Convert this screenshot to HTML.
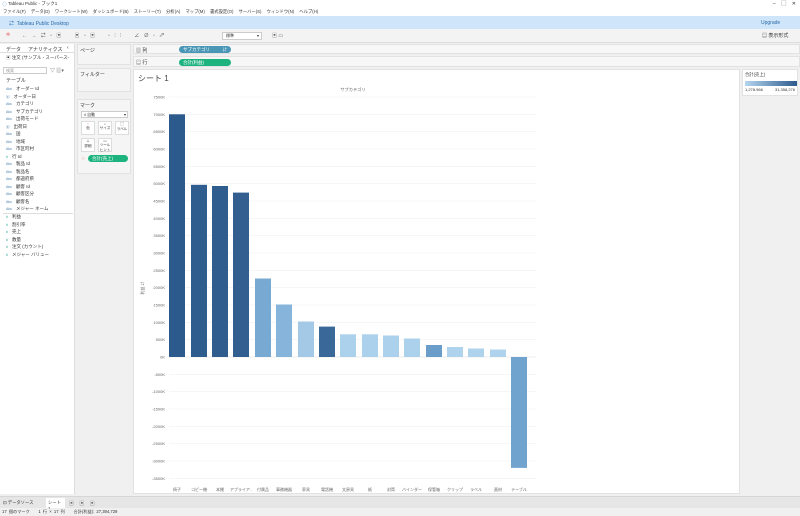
<!DOCTYPE html>
<html><head><meta charset="utf-8"><style>
*{margin:0;padding:0;box-sizing:border-box}
body{width:800px;height:516px;overflow:hidden;background:#f0f0f0;font-family:"Liberation Sans","Noto Sans CJK JP",sans-serif;font-size:5px;color:#333;position:relative}
.a{position:absolute}
.t{font-size:5px;white-space:nowrap}
.pill{position:absolute;border-radius:5px;color:#fff;font-size:4.5px;padding:1px 4px;height:7px;line-height:5px}
.li{position:absolute;left:6px;font-size:4.5px;white-space:nowrap}
.li b{color:#4a7fb0;font-weight:normal;margin-right:4px;font-size:3.5px}
</style></head><body>
<div class="a" style="left:0;top:0;width:800px;height:8px;background:#fff"><span class="t a" style="left:8px;top:1px;font-size:4.5px">Tableau Public - ブック1</span><span class="a" style="left:2px;top:1px;color:#4a7fb0">◇</span><span class="a t" style="right:4px;top:0">–&nbsp;&nbsp;&nbsp;&nbsp;▢&nbsp;&nbsp;&nbsp;&nbsp;✕</span></div>
<div class="a t" style="left:0;top:8px;width:800px;height:8px;background:#fff;padding:1px 3px;font-size:4.3px;word-spacing:4px">ファイル(F) データ(D) ワークシート(W) ダッシュボード(B) ストーリー(T) 分析(A) マップ(M) 書式設定(O) サーバー(S) ウィンドウ(N) ヘルプ(H)</div>
<div class="a" style="left:0;top:16px;width:800px;height:13px;background:#cfe6fa"><span class="a t" style="left:9px;top:4px;color:#2a6aa8">⇄&nbsp; Tableau Public Desktop</span><span class="a t" style="left:761px;top:4px;color:#2a6aa8">Upgrade</span></div>
<div class="a" style="left:0;top:29px;width:800px;height:14px;background:#f3f3f3;border-bottom:1px solid #ddd">
<span class="a t" style="left:6px;top:3px;color:#e06060">✲</span>
<span class="a t" style="left:22px;top:3px;color:#555;word-spacing:3px">← → ⇄ ▫ ▣ &nbsp; ▣ ▫ ▣ &nbsp; ▫ ⫶ ⫶ &nbsp; ∠ ∅ ▫ ⇗</span>
<div class="a" style="left:222px;top:3px;width:40px;height:8px;background:#fff;border:1px solid #ccc;font-size:4px;padding-left:3px">標準<span style="float:right;margin-right:2px">▾</span></div>
<span class="a t" style="left:272px;top:3px;color:#555">▣ ▭</span>
<span class="a t" style="left:762px;top:3px">▤ 表示形式</span></div>
<!-- left data pane -->
<div class="a" style="left:0;top:44px;width:75px;height:450px;background:#fff;border-right:1px solid #ddd">
<span class="a t" style="left:6px;top:2px">データ</span><span class="a t" style="left:28px;top:2px">アナリティクス</span><span class="a t" style="left:67px;top:1px">‹</span>
<div class="a" style="left:0;top:8px;width:75px;height:1px;background:#ddd"></div>
<span class="a t" style="left:6px;top:11px;font-size:4.5px">▣ 注文 (サンプル - スーパース-</span>
<div class="a" style="left:3px;top:23px;width:44px;height:7px;border:1px solid #ccc;font-size:4px;color:#999;padding-left:2px">検索</div>
<span class="a t" style="left:50px;top:23px;color:#666">▽ ▥▾</span>
<span class="a t" style="left:6px;top:33px">テーブル</span>
<div class="li" style="top:42px"><b>Abc</b>オーダー Id</div>
<div class="li" style="top:49.5px"><b>▣</b>オーダー日</div>
<div class="li" style="top:57px"><b>Abc</b>カテゴリ</div>
<div class="li" style="top:64.5px"><b>Abc</b>サブカテゴリ</div>
<div class="li" style="top:72px"><b>Abc</b>出荷モード</div>
<div class="li" style="top:79.5px"><b>▣</b>出荷日</div>
<div class="li" style="top:87px"><b>Abc</b>国</div>
<div class="li" style="top:94.5px"><b>Abc</b>地域</div>
<div class="li" style="top:102px"><b>Abc</b>市区町村</div>
<div class="li" style="top:109.5px"><b style="color:#3a9">#</b>行 Id</div>
<div class="li" style="top:117px"><b>Abc</b>製品 Id</div>
<div class="li" style="top:124.5px"><b>Abc</b>製品名</div>
<div class="li" style="top:132px"><b>Abc</b>都道府県</div>
<div class="li" style="top:139.5px"><b>Abc</b>顧客 Id</div>
<div class="li" style="top:147px"><b>Abc</b>顧客区分</div>
<div class="li" style="top:154.5px"><b>Abc</b>顧客名</div>
<div class="li" style="top:162px"><b>Abc</b>メジャー ネーム</div>
<div class="a" style="left:3px;top:169px;width:70px;height:1px;background:#ddd"></div>
<div class="li" style="top:170px"><b style="color:#3a9">#</b>利益</div>
<div class="li" style="top:177.5px"><b style="color:#3a9">#</b>割引率</div>
<div class="li" style="top:185px"><b style="color:#3a9">#</b>売上</div>
<div class="li" style="top:192.5px"><b style="color:#3a9">#</b>数量</div>
<div class="li" style="top:200px"><b style="color:#3a9">#</b>注文 (カウント)</div>
<div class="li" style="top:207.5px"><b style="color:#3a9">#</b>メジャー バリュー</div>
</div>
<!-- cards -->
<div class="a" style="left:77px;top:44px;width:54px;height:21px;background:#f5f5f5;border:1px solid #e2e2e2"><span class="a t" style="left:2px;top:2px">ページ</span></div>
<div class="a" style="left:77px;top:68px;width:54px;height:24px;background:#f5f5f5;border:1px solid #e2e2e2"><span class="a t" style="left:2px;top:2px">フィルター</span></div>
<div class="a" style="left:77px;top:99px;width:54px;height:75px;background:#f5f5f5;border:1px solid #e2e2e2">
<span class="a t" style="left:2px;top:2px">マーク</span>
<div class="a" style="left:3px;top:11px;width:47px;height:7px;background:#fff;border:1px solid #ccc;font-size:4px;padding-left:2px">ıl 自動<span style="float:right;margin-right:1px">▾</span></div>
<div class="a" style="left:3px;top:21px;width:14px;height:14px;background:#fff;border:1px solid #ddd;font-size:3.5px;text-align:center"><span style="color:#e06050">⁘</span><br>色</div>
<div class="a" style="left:20px;top:21px;width:14px;height:14px;background:#fff;border:1px solid #ddd;font-size:3.5px;text-align:center">⌕<br>サイズ</div>
<div class="a" style="left:37px;top:21px;width:14px;height:14px;background:#fff;border:1px solid #ddd;font-size:3.5px;text-align:center">▢<br>ラベル</div>
<div class="a" style="left:3px;top:38px;width:14px;height:14px;background:#fff;border:1px solid #ddd;font-size:3.5px;text-align:center">⊥<br>詳細</div>
<div class="a" style="left:20px;top:38px;width:14px;height:14px;background:#fff;border:1px solid #ddd;font-size:3.5px;text-align:center">▭<br>ツールヒント</div>
<span class="a" style="left:3px;top:56px;color:#e06050;font-size:5px">⁘</span>
<div class="pill" style="left:10px;top:55px;width:40px;background:#1db37f">合計(売上)</div>
</div>
<!-- shelves -->
<div class="a" style="left:133px;top:44px;width:667px;height:10px;background:#f7f7f7;border:1px solid #e2e2e2"><span class="a t" style="left:2px;top:2px">▥ 列</span><div class="pill" style="left:45px;top:1px;width:52px;background:#4a96b6">サブカテゴリ<span style="float:right">⇵</span></div></div>
<div class="a" style="left:133px;top:56px;width:667px;height:11px;background:#f7f7f7;border:1px solid #e2e2e2"><span class="a t" style="left:2px;top:2px">▤ 行</span><div class="pill" style="left:45px;top:1.5px;width:52px;background:#1db37f">合計(利益)</div></div>
<!-- sheet -->
<div class="a" style="left:133px;top:69px;width:607px;height:425px;background:#fff;border:1px solid #e2e2e2">
<span class="a" style="left:4px;top:3px;font-size:8px;color:#444">シート 1</span>
<svg class="a" style="left:0;top:0" width="607" height="425" viewBox="133 69 607 425">
<g font-family="Liberation Sans,Noto Sans CJK JP,sans-serif" font-size="4" fill="#666" text-anchor="end">
<text x="352" y="90" text-anchor="middle" font-size="4.2">サブカテゴリ</text>
<g stroke="#f0f0f0" stroke-width="0.6">
<line x1="168" x2="535" y1="96" y2="96"/><line x1="168" x2="535" y1="113.3" y2="113.3"/><line x1="168" x2="535" y1="130.7" y2="130.7"/><line x1="168" x2="535" y1="148" y2="148"/><line x1="168" x2="535" y1="165.3" y2="165.3"/><line x1="168" x2="535" y1="182.7" y2="182.7"/><line x1="168" x2="535" y1="200" y2="200"/><line x1="168" x2="535" y1="217.3" y2="217.3"/><line x1="168" x2="535" y1="234.7" y2="234.7"/><line x1="168" x2="535" y1="252" y2="252"/><line x1="168" x2="535" y1="269.3" y2="269.3"/><line x1="168" x2="535" y1="286.7" y2="286.7"/><line x1="168" x2="535" y1="304" y2="304"/><line x1="168" x2="535" y1="321.3" y2="321.3"/><line x1="168" x2="535" y1="338.7" y2="338.7"/><line x1="168" x2="535" y1="373.3" y2="373.3"/><line x1="168" x2="535" y1="390.7" y2="390.7"/><line x1="168" x2="535" y1="408" y2="408"/><line x1="168" x2="535" y1="425.3" y2="425.3"/><line x1="168" x2="535" y1="442.7" y2="442.7"/><line x1="168" x2="535" y1="460" y2="460"/><line x1="168" x2="535" y1="477.3" y2="477.3"/>
</g>
<line x1="168" x2="535" y1="356" y2="356" stroke="#ddd" stroke-width="0.6"/>
<text x="164" y="97.5">7500K</text><text x="164" y="114.8">7000K</text><text x="164" y="132.2">6500K</text><text x="164" y="149.5">6000K</text><text x="164" y="166.8">5500K</text><text x="164" y="184.2">5000K</text><text x="164" y="201.5">4500K</text><text x="164" y="218.8">4000K</text><text x="164" y="236.2">3500K</text><text x="164" y="253.5">3000K</text><text x="164" y="270.8">2500K</text><text x="164" y="288.2">2000K</text><text x="164" y="305.5">1500K</text><text x="164" y="322.8">1000K</text><text x="164" y="340.2">500K</text><text x="164" y="357.5">0K</text><text x="164" y="374.8">-500K</text><text x="164" y="392.2">-1000K</text><text x="164" y="409.5">-1500K</text><text x="164" y="426.8">-2000K</text><text x="164" y="444.2">-2500K</text><text x="164" y="461.5">-3000K</text><text x="164" y="478.8">-3500K</text>
<text x="143" y="287" transform="rotate(-90 143 287)" text-anchor="middle">利益 ⇵</text>
<g>
<rect x="168" y="113.3" width="16" height="242.7" fill="#2d5a8c"/>
<rect x="190" y="183.8" width="16" height="172.2" fill="#2f5d8e"/>
<rect x="211" y="185" width="16" height="171" fill="#2f5d8e"/>
<rect x="232" y="191.6" width="16" height="164.4" fill="#325f90"/>
<rect x="254" y="277.5" width="16" height="78.5" fill="#77a9d2"/>
<rect x="275" y="303.5" width="16" height="52.5" fill="#86b4da"/>
<rect x="297" y="320.5" width="16" height="35.5" fill="#a4c9e6"/>
<rect x="318" y="325.6" width="16" height="30.4" fill="#3a6899"/>
<rect x="339" y="333.3" width="16" height="22.7" fill="#acd1ec"/>
<rect x="361" y="333.3" width="16" height="22.7" fill="#acd1ec"/>
<rect x="382" y="334.5" width="16" height="21.5" fill="#acd1ec"/>
<rect x="403" y="337.5" width="16" height="18.5" fill="#acd1ec"/>
<rect x="425" y="344" width="16" height="12" fill="#6a9dca"/>
<rect x="446" y="346" width="16" height="10" fill="#b0d3ed"/>
<rect x="467" y="347.5" width="16" height="8.5" fill="#b0d3ed"/>
<rect x="489" y="348.5" width="16" height="7.5" fill="#b0d3ed"/>
<rect x="510" y="356" width="16" height="110.9" fill="#70a3cd"/>
</g>
<g text-anchor="middle" font-size="4">
<text x="176" y="490">椅子</text><text x="198" y="490">コピー機</text><text x="219" y="490">本棚</text><text x="240" y="490">アプライア..</text><text x="262" y="490">付属品</text><text x="283" y="490">事務機器</text><text x="305" y="490">家具</text><text x="326" y="490">電話機</text><text x="347" y="490">文房具</text><text x="369" y="490">紙</text><text x="390" y="490">封筒</text><text x="411" y="490">バインダー</text><text x="433" y="490">保管箱</text><text x="454" y="490">クリップ</text><text x="475" y="490">ラベル</text><text x="497" y="490">画材</text><text x="518" y="490">テーブル</text>
</g></g></svg>
</div>
<!-- legend -->
<div class="a" style="left:742px;top:69px;width:56px;height:27px;background:#fff;border:1px solid #e2e2e2">
<span class="a t" style="left:2px;top:2px;font-size:4.3px">合計(売上)</span>
<div class="a" style="left:2px;top:11px;width:52px;height:5px;background:linear-gradient(90deg,#b4d6f0,#2d5a8c)"></div>
<span class="a t" style="left:2px;top:17px;font-size:4px">1,278.966</span><span class="a t" style="right:2px;top:17px;font-size:4px">31,358,276</span></div>
<!-- bottom tabs -->
<div class="a" style="left:0;top:496px;width:800px;height:12px;background:#e6e6e6;border-top:1px solid #d6d6d6">
<span class="a t" style="left:3px;top:3px;font-size:4.3px">⊡ データソース</span>
<div class="a" style="left:46px;top:1px;width:19px;height:10px;background:#fff;font-size:4.3px;padding:2px 2px">シート 1</div>
<span class="a t" style="left:69px;top:3px;color:#666;word-spacing:4px">▣ ▣ ▣</span></div>
<div class="a t" style="left:0;top:509px;width:800px;height:7px;background:#f0f0f0;font-size:4.2px;padding-left:2px;word-spacing:1px">17 個のマーク&nbsp;&nbsp;&nbsp; 1 行 × 17 列&nbsp;&nbsp;&nbsp; 合計(利益): 27,394,729</div>
</body></html>
